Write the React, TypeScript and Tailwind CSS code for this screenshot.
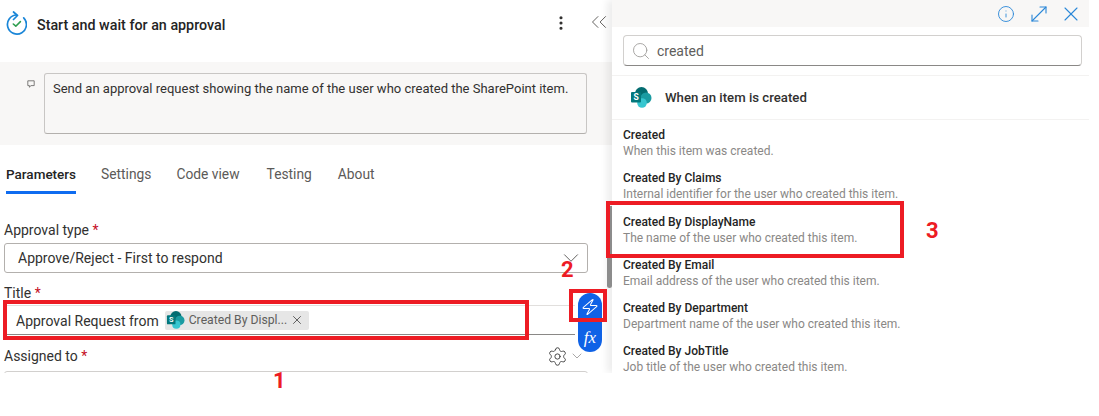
import { ChevronDown, ChevronsLeft, EllipsisVertical, Info, MoveDiagonal, Search, Settings, X, Zap } from "lucide-react";

const tokens = [
  { name: "Created", desc: "When this item was created." },
  { name: "Created By Claims", desc: "Internal identifier for the user who created this item." },
  { name: "Created By DisplayName", desc: "The name of the user who created this item." },
  { name: "Created By Email", desc: "Email address of the user who created this item." },
  { name: "Created By Department", desc: "Department name of the user who created this item." },
  { name: "Created By JobTitle", desc: "Job title of the user who created this item." },
];

function SharePointLogo({ className }: { className: string }) {
  return (
    <svg viewBox="0 0 22 21" className={className}>
      <circle cx="11.5" cy="6.5" r="6.5" fill="#036c70" />
      <circle cx="16" cy="11" r="5.5" fill="#1a9ba1" />
      <circle cx="12" cy="16" r="4.8" fill="#37c6d0" />
      <rect x="1" y="5" width="10" height="10.5" rx="1" fill="#03787c" />
      <text x="6" y="13.4" textAnchor="middle" fontSize="8.5" fontWeight="700" fill="#fff" fontFamily="Roboto, sans-serif">
        S
      </text>
    </svg>
  );
}

function ApprovalIcon() {
  return (
    <svg viewBox="0 0 22 26" className="w-[22px] h-[26px] shrink-0" fill="none">
      <path d="M18.7 6.8A9.5 9.5 0 1 1 11.5 4" stroke="#1a86d8" strokeWidth="1.7" strokeLinecap="round" />
      <path d="M8.5 1 12.5 4.5 8.5 8.5" stroke="#1a86d8" strokeWidth="1.7" strokeLinecap="round" strokeLinejoin="round" />
      <path d="M8.3 13 10.8 15.2 15.4 10.6" stroke="#2e9e4f" strokeWidth="1.6" strokeLinecap="round" strokeLinejoin="round" />
    </svg>
  );
}

function Label({ text }: { text: string }) {
  return (
    <div className="text-[14px] leading-[20px] text-[#323130] whitespace-nowrap">
      {text} <span className="text-[#c50f1f]">*</span>
    </div>
  );
}

export default function App() {
  return (
    <div className="relative w-[1099px] h-[416px] bg-white overflow-hidden font-['Roboto',sans-serif]">
      <div className="flex w-[1089px] h-[373px] overflow-hidden">
        {/* flow editor panel */}
        <div className="w-[612px] shrink-0">
          <div className="h-[62px] flex items-start pt-[11px] pl-[5px]">
            <ApprovalIcon />
            <span className="ml-[10px] mt-[3px] text-[14.3px] leading-[22px] font-medium text-[#242424]">Start and wait for an approval</span>
            <EllipsisVertical className="ml-auto mt-[3px] w-[18px] h-[18px] text-[#323130]" strokeWidth={2.2} />
            <ChevronsLeft className="ml-[16px] -mt-[2px] w-[26px] h-[26px] text-[#605e5c]" strokeWidth={0.9} />
          </div>
          <div className="h-[83px] bg-[#f8f7f6] flex items-start pt-[11px] pl-[27px]">
            <svg viewBox="0 0 10 10" className="w-[8px] h-[8px] mt-[7px] shrink-0" fill="none">
              <path d="M1 1h8v6H5L3 9V7H1z" stroke="#605e5c" strokeWidth="1" />
            </svg>
            <div className="ml-[9px] w-[543px] h-[61px] rounded-[3px] border border-[#c8c6c4] border-b-[#b3b0ad] px-[8px] py-[4px] text-[13px] leading-[22px] text-[#323130]">
              Send an approval request showing the name of the user who created the SharePoint item.
            </div>
          </div>
          <div className="h-[50px] flex items-start pl-[6px] gap-[25px] pt-[18px] text-[13.8px] leading-[22px] text-[#5c5a58]">
            <span className="h-[31px] border-b-[3px] border-[#0f6cf0] text-[13.5px] font-medium text-[#242424]">Parameters</span>
            <span>Settings</span>
            <span>Code view</span>
            <span className="ml-[2px]">Testing</span>
            <span className="ml-[1px]">About</span>
          </div>
          <div className="pl-[4px] pr-[24px] pt-[25px]">
            <Label text="Approval type" />
            <div className="mt-[3px] h-[30px] rounded-[3px] border border-[#b3b0ad] flex items-center pl-[13px] pr-[3px] text-[14px] text-[#323130]">
              Approve/Reject - First to respond
              <ChevronDown className="ml-auto w-[26px] h-[26px] text-[#605e5c]" strokeWidth={0.9} />
            </div>
            <div className="mt-[10px]">
              <Label text="Title" />
            </div>
            <div className="mt-[2px] h-[30px] w-[571px] border-t border-[#e1dfdd] border-b border-b-[#8a8886] flex items-center pl-[12px] text-[14px] text-[#323130]">
              <span className="mt-[3px]">Approval Request from</span>
              <span className="ml-[6px] h-[19px] w-[144px] rounded-[2px] bg-[#e6e6e6] flex items-center pl-[1px] text-[12.2px] text-[#605e5c] whitespace-nowrap">
                <SharePointLogo className="w-[19px] h-[18px] shrink-0" />
                <span className="ml-[4px]">Created By Displ...</span>
                <X className="ml-auto mr-[5px] w-[14px] h-[14px] text-[#424242]" strokeWidth={1.4} />
              </span>
            </div>
            <div className="mt-[11px] flex items-center h-[20px]">
              <Label text="Assigned to" />
              <Settings className="ml-auto w-[21px] h-[21px] text-[#424242]" strokeWidth={1.1} />
              <ChevronDown className="ml-[1.5px] mr-[3px] w-[16px] h-[16px] text-[#8a8886]" strokeWidth={1.1} />
            </div>
            <div className="mt-[5px] h-[30px] rounded-[3px] border border-[#d2d0ce]" />
          </div>
        </div>

        {/* dynamic content panel */}
        <div className="w-[477px] shrink-0 shadow-[-5px_0_7px_rgba(0,0,0,0.07)]">
          <div className="h-[27px] bg-[#f8f7f6] flex items-center justify-end pr-[2px] text-[#2b88d8]">
            <div className="w-[33px] flex justify-center">
              <Info className="w-[18px] h-[18px]" strokeWidth={1.2} />
            </div>
            <div className="w-[33px] flex justify-center">
              <MoveDiagonal className="w-[24px] h-[24px]" strokeWidth={1.1} />
            </div>
            <div className="w-[32px] flex justify-center">
              <X className="w-[24px] h-[24px]" strokeWidth={1.1} />
            </div>
          </div>
          <div className="h-[48px] pt-[8px] pl-[11px] pr-[7px]">
            <div className="h-[31px] rounded-[4px] border border-[#d2d0ce] border-b-[#8a8886] flex items-center pl-[7px] text-[14px] text-[#605e5c]">
              <Search className="w-[20px] h-[20px] text-[#a19f9d]" strokeWidth={1.1} />
              <span className="ml-[6px] mt-[2px]">created</span>
            </div>
          </div>
          <div className="h-[45px] border-y border-[#f3f2f1] flex items-center pl-[18px]">
            <SharePointLogo className="w-[22px] h-[21px]" />
            <span className="ml-[13px] mt-[1px] text-[13.2px] font-medium text-[#323130]">When an item is created</span>
          </div>
          {tokens.map((token) => (
            <div key={token.name} className="h-[43.3px] pl-[11px] pt-[7px]">
              <div className="text-[12px] leading-[16px] font-medium text-[#242424]">{token.name}</div>
              <div className="text-[12px] leading-[16px] text-[#8a8886]">{token.desc}</div>
            </div>
          ))}
        </div>
      </div>

      {/* token picker buttons */}
      <div className="absolute left-[578px] top-[293px] w-[24px] h-[59px] rounded-full bg-[#0f62e6] flex flex-col items-center text-white">
        <Zap className="mt-[5px] w-[18px] h-[18px] -skew-x-12" strokeWidth={1.4} />
        <span className="mt-[13px] font-['Liberation_Serif',serif] italic text-[17px] leading-[18px]">fx</span>
      </div>

      {/* scrollbar */}
      <div className="absolute left-[607px] top-[206px] w-[5px] h-[82px] rounded-b-[3px] bg-[#8c8c8c]" />

      {/* red annotations */}
      <div className="absolute left-[3px] top-[300px] w-[526px] h-[40px] border-[4px] border-[#ed1c24]" />
      <div className="absolute left-[569px] top-[289px] w-[38px] h-[33px] border-[4px] border-[#ed1c24]" />
      <div className="absolute left-[606px] top-[201px] w-[298px] h-[57px] border-[4px] border-[#ed1c24]" />
      <span className="absolute left-[273px] top-[366px] text-[22px] leading-[30px] font-bold text-[#ed1c24]">1</span>
      <span className="absolute left-[561px] top-[255px] text-[22px] leading-[30px] font-bold text-[#ed1c24]">2</span>
      <span className="absolute left-[926px] top-[216px] text-[22px] leading-[30px] font-bold text-[#ed1c24]">3</span>
    </div>
  );
}
